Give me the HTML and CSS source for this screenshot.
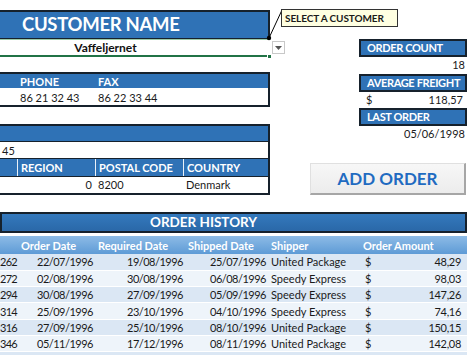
FILE: index.html
```html
<!DOCTYPE html>
<html lang="en">

<head>
  <meta charset="UTF-8">
  <meta name="viewport" content="width=device-width">
  <title>Customer Orders</title>
  <link rel="stylesheet" href="styles.css">
</head>

<body>
  <main class='sheet'>
    <div class='top'>
      <section class='customer'>
        <div class='customer-head'>CUSTOMER NAME</div>
        <div class='customer-pick'>
          <span class='customer-name'>Vaffeljernet</span>
          <span class='fill-handle'></span>
          <span class='dropdown'><svg width='7' height='4' viewBox='0 0 7 4'><path d='M0 0h7L3.5 4z' fill='#555'/></svg></span>
        </div>

        <div class='block contact'>
          <div class='block-head contact-cols'><span>PHONE</span><span>FAX</span></div>
          <div class='block-row contact-cols'><span>86 21 32 43</span><span>86 22 33 44</span></div>
        </div>

        <div class='block address'>
          <div class='block-head address-top'></div>
          <div class='block-row address-line'>45</div>
          <div class='address-cols address-sub'>
            <span></span><span>REGION</span><span>POSTAL CODE</span><span>COUNTRY</span>
          </div>
          <div class='address-cols address-data'>
            <span></span><span class='num'>0</span><span>8200</span><span>Denmark</span>
          </div>
        </div>
      </section>

      <aside class='stats'>
        <div class='stat-head'>ORDER COUNT</div>
        <div class='stat-value'>18</div>
        <div class='stat-head'>AVERAGE FREIGHT</div>
        <div class='stat-value money'><span>$</span><span>118,57</span></div>
        <div class='stat-head'>LAST ORDER</div>
        <div class='stat-value'>05/06/1998</div>
        <button class='add-order'>ADD ORDER</button>
      </aside>
    </div>

    <section class='history'>
      <div class='history-head'>ORDER HISTORY</div>
      <table class='orders'>
        <colgroup>
          <col class='c-id'><col class='c-date'><col class='c-req'><col class='c-ship'><col class='c-shipper'><col class='c-amount'>
        </colgroup>
        <thead>
          <tr><th></th><th>Order Date</th><th>Required Date</th><th>Shipped Date</th><th>Shipper</th><th>Order Amount</th></tr>
        </thead>
        <tbody>
          <tr><td class='id'>262</td><td>22/07/1996</td><td>19/08/1996</td><td>25/07/1996</td><td class='shipper'>United Package</td><td class='amount'><span>$</span><span>48,29</span></td></tr>
          <tr><td class='id'>272</td><td>02/08/1996</td><td>30/08/1996</td><td>06/08/1996</td><td class='shipper'>Speedy Express</td><td class='amount'><span>$</span><span>98,03</span></td></tr>
          <tr><td class='id'>294</td><td>30/08/1996</td><td>27/09/1996</td><td>05/09/1996</td><td class='shipper'>Speedy Express</td><td class='amount'><span>$</span><span>147,26</span></td></tr>
          <tr><td class='id'>314</td><td>25/09/1996</td><td>23/10/1996</td><td>04/10/1996</td><td class='shipper'>Speedy Express</td><td class='amount'><span>$</span><span>74,16</span></td></tr>
          <tr><td class='id'>316</td><td>27/09/1996</td><td>25/10/1996</td><td>08/10/1996</td><td class='shipper'>United Package</td><td class='amount'><span>$</span><span>150,15</span></td></tr>
          <tr><td class='id'>346</td><td>05/11/1996</td><td>17/12/1996</td><td>08/11/1996</td><td class='shipper'>United Package</td><td class='amount'><span>$</span><span>142,08</span></td></tr>
          <tr><td class='id'></td><td></td><td></td><td></td><td></td><td></td></tr>
        </tbody>
      </table>
    </section>

    <!-- comment callout over the sheet -->
    <svg class='callout-line' width='20' height='34' viewBox='0 0 20 34'>
      <path d='M16 1L3 29' stroke='#000' stroke-width='1'/>
      <circle cx='3' cy='29' r='2.2' fill='#000'/>
    </svg>
    <div class='callout'>SELECT A CUSTOMER</div>
  </main>
</body>

</html>
```

FILE: styles.css
```css
* {
  box-sizing: border-box;
}

html,
body {
  margin: 0;
  padding: 0;
  background-color: #fff;
  --blue: #2f72b6;
  --edge: #16212c;
  --light-row: #dbe7f4;
  --pale-row: #eef4fa;
  font-family: 'Lato', 'Liberation Sans', sans-serif;
  color: #1a1a1a;
}

.sheet {
  position: relative;
  width: 474px;
  height: 355px;
  overflow: hidden;
  padding-top: 10px;
}

.top {
  display: grid;
  grid-template-columns: 270px 1fr;
}

/* customer block */
.customer-head {
  height: 29px;
  background-color: var(--blue);
  border-top: 2px solid var(--edge);
  border-right: 2px solid var(--edge);
  border-bottom: 1px solid var(--edge);
  color: #fff;
  font-weight: 700;
  font-size: 18.5px;
  line-height: 25px;
  padding-left: 22px;
  letter-spacing: -0.3px;
}

.customer-pick {
  position: relative;
  height: 18px;
  border-top: 1px solid #9cc9a8;
  border-bottom: 2px solid #217346;
  margin-right: 1px;
  display: flex;
  justify-content: center;
  padding-right: 58px;
}

.customer-name {
  font-weight: 700;
  font-size: 12px;
  line-height: 15px;
  color: #111;
}

.fill-handle {
  position: absolute;
  right: -3px;
  bottom: -4px;
  width: 5px;
  height: 5px;
  background-color: #217346;
  border: 1px solid #fff;
}

.dropdown {
  position: absolute;
  right: -16px;
  top: 1px;
  width: 13px;
  height: 13px;
  border: 1px solid #c8c8c8;
  background-color: #fff;
  display: grid;
  place-items: center;
}

.block {
  border-right: 2px solid var(--edge);
}

.contact {
  margin-top: 15px;
  border-bottom: 2px solid var(--edge);
}

.block-head {
  background-color: var(--blue);
  border-top: 2px solid var(--edge);
  color: #fff;
  font-weight: 700;
  font-size: 11px;
  height: 16px;
  line-height: 15px;
}

.block-row {
  font-size: 11px;
  height: 17px;
  line-height: 19px;
}

.contact-cols {
  display: grid;
  grid-template-columns: 78px 1fr;
  padding-left: 20px;
}

.address {
  margin-top: 17px;
  border-bottom: 2px solid var(--edge);
}

.address-top {
  height: 18px;
  border-bottom: 1px solid var(--edge);
}

.address-line {
  height: 17px;
  line-height: 17px;
  padding-left: 2px;
  border-bottom: 1px solid var(--edge);
}

.address-cols {
  display: grid;
  grid-template-columns: 17px 78px 88px 1fr;
}

.address-sub {
  height: 18px;
  background-color: var(--blue);
  color: #fff;
  font-weight: 700;
  font-size: 11px;
  line-height: 17px;
  border-bottom: 1px solid var(--edge);
}

.address-sub span {
  border-left: 1px solid #eaf1f8;
  padding-left: 3px;
}

.address-sub span:first-child {
  border-left: 0;
}

.address-data {
  height: 16px;
  font-size: 11px;
  line-height: 16px;
}

.address-data span {
  padding-left: 3px;
}

.address-data .num {
  text-align: right;
  padding-right: 3px;
}

/* right hand stats */
.stats {
  display: flex;
  flex-direction: column;
  align-items: flex-end;
  padding-top: 29px;
  padding-right: 7px;
}

.stat-head {
  width: 108px;
  height: 18px;
  background-color: var(--blue);
  border: 2px solid var(--edge);
  color: #fff;
  font-weight: 700;
  font-size: 11px;
  letter-spacing: -0.35px;
  line-height: 14px;
  padding-left: 6px;
  white-space: nowrap;
}

.stat-value {
  width: 108px;
  height: 16.5px;
  font-size: 11px;
  line-height: 16px;
  text-align: right;
  padding-right: 2px;
}

.stat-value.money {
  display: flex;
  justify-content: space-between;
  padding-left: 7px;
  padding-right: 4px;
}

.add-order {
  align-self: flex-start;
  margin-top: 20px;
  margin-left: 40px;
  width: 156px;
  height: 32px;
  background: linear-gradient(#f7f7f7, #ececec);
  border: 1px solid #e0e0e0;
  border-right: 2px solid #a6a6a6;
  border-bottom: 2px solid #a6a6a6;
  color: #1f6bc1;
  font-family: 'Lato', 'Liberation Sans', sans-serif;
  font-weight: 700;
  font-size: 17px;
  padding: 0;
}

/* order history */
.history {
  margin-top: 17px;
  width: 467px;
}

.history-head {
  height: 21px;
  background: linear-gradient(#3479bd, #2a68a8);
  border: 2px solid var(--edge);
  color: #fff;
  font-weight: 700;
  font-size: 13.5px;
  line-height: 17px;
  text-align: center;
  padding-right: 60px;
}

.orders {
  margin-top: 3px;
  width: 467px;
  border-collapse: collapse;
  table-layout: fixed;
  font-size: 11px;
}

.c-id { width: 18px; }
.c-date { width: 77px; }
.c-req { width: 90px; }
.c-ship { width: 83px; }
.c-shipper { width: 92px; }
.c-amount { width: 107px; }

.orders th {
  height: 18px;
  padding: 0 0 0 3px;
  background: linear-gradient(#8dbbe6, #5e9bd6);
  color: #fff;
  font-weight: 700;
  font-size: 11px;
  text-align: left;
  white-space: nowrap;
}

.orders td {
  height: 16.3px;
  padding: 0 2px 0 0;
  text-align: right;
  border-bottom: 1px solid #fff;
  white-space: nowrap;
  overflow: hidden;
  letter-spacing: -0.5px;
}

.orders tbody tr:nth-child(odd) td {
  background-color: var(--light-row);
}

.orders tbody tr:nth-child(even) td {
  background-color: var(--pale-row);
}

.orders td.id {
  padding-right: 1px;
  text-align: right;
  letter-spacing: -0.7px;
}

.orders td.shipper {
  text-align: left;
  padding-left: 3px;
  letter-spacing: 0;
}

.orders td.amount span:first-child {
  float: left;
  padding-left: 5px;
}

.orders td.amount {
  padding-right: 6px;
  letter-spacing: -0.3px;
}

/* callout */
.callout {
  position: absolute;
  left: 281px;
  top: 9px;
  width: 117px;
  height: 18px;
  background-color: #ffffe1;
  border: 1px solid #333;
  font-weight: 700;
  font-size: 10px;
  letter-spacing: -0.1px;
  line-height: 16px;
  padding-left: 3px;
  white-space: nowrap;
}

.callout-line {
  position: absolute;
  left: 266px;
  top: 9px;
}
```
